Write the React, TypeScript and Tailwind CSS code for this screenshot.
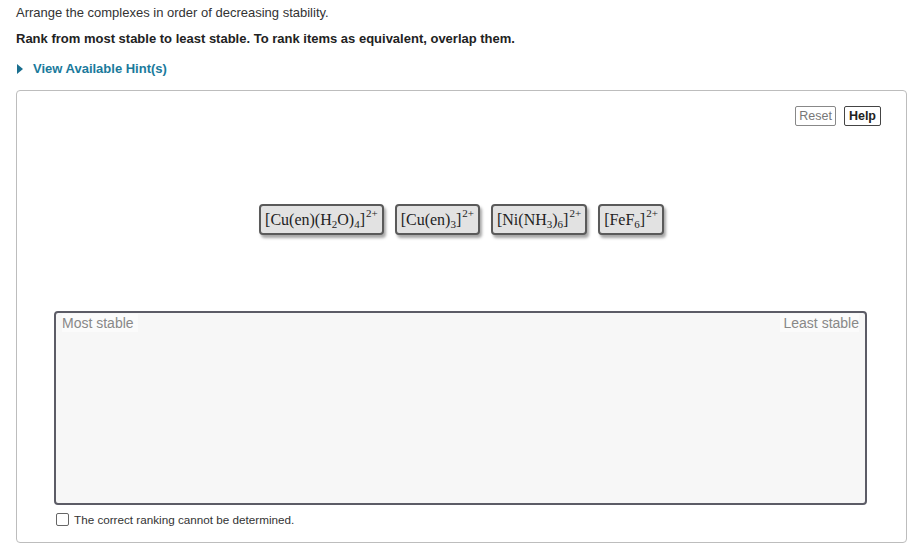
import React from 'react';

const sub = 'text-[11px] relative top-[3px] align-baseline leading-none';

const TILES: { id: string; body: React.ReactNode }[] = [
  { id: 'cuenh2o', body: <>[Cu(en)(H<span className={sub}>2</span>O)<span className={sub}>4</span>]</> },
  { id: 'cuen3', body: <>[Cu(en)<span className={sub}>3</span>]</> },
  { id: 'ninh3', body: <>[Ni(NH<span className={sub}>3</span>)<span className={sub}>6</span>]</> },
  { id: 'fef6', body: <>[FeF<span className={sub}>6</span>]</> },
];

function Tile({ children }: { children: React.ReactNode }) {
  return (
    <div className="h-[31px] px-[4px] flex items-center rounded-[4px] border-2 border-[#5a5a5a] bg-[#e2e2e2] shadow-[2px_3px_3px_rgba(0,0,0,0.35)] text-[16px] text-[#222] leading-none"
      style={{ fontFamily: '"Liberation Serif", "DejaVu Serif", serif' }}>
      <span>{children}</span>
      <span className="text-[11px] relative top-[-6px] ml-[1px] leading-none">2+</span>
    </div>
  );
}

export default function App() {
  return (
    <div className="w-[917px] h-[551px] bg-white text-[#333] overflow-hidden"
      style={{ fontFamily: '"Liberation Sans", Arial, sans-serif' }}>
      <div className="pl-4 pr-[11px] pt-[5px]">
        <p className="text-[13px] leading-[16px]">Arrange the complexes in order of decreasing stability.</p>
        <p className="text-[13px] font-bold leading-[16px] mt-[10px] text-[#222]">
          Rank from most stable to least stable. To rank items as equivalent, overlap them.
        </p>
        <div className="flex items-center mt-[14px] text-[13px] font-bold text-[#1a7a9c] leading-[16px]">
          <span className="w-0 h-0 border-y-[5px] border-y-transparent border-l-[6px] border-l-[#1a6f8f] ml-[1px] mr-[10px]" />
          View Available Hint(s)
        </div>

        <div className="mt-[13px] w-[891px] h-[453px] border border-[#bdbdbd] rounded-[4px] flex flex-col">
          <div className="flex justify-end gap-[8px] pt-[15px] pr-[25px]">
            <button className="h-[20px] px-[3px] border border-[#888] rounded-[2px] text-[12.5px] text-[#777] bg-white leading-none">Reset</button>
            <button className="h-[20px] px-[4px] border border-[#444] rounded-[2px] text-[12.5px] font-bold text-[#222] bg-white leading-none">Help</button>
          </div>

          <div className="flex justify-center gap-[11px] mt-[78px]">
            {TILES.map(t => <Tile key={t.id}>{t.body}</Tile>)}
          </div>

          <div className="mt-[76px] ml-[37px] w-[813px] h-[194px] border-2 border-[#5c5c66] rounded-[4px] bg-[#f7f7f7] flex justify-between items-start px-[6px] pt-[1px] text-[14px] text-[#888] leading-[18px]">
            <span className="bg-[#fbfbfb] pr-1">Most stable</span>
            <span className="bg-[#fbfbfb] pl-1">Least stable</span>
          </div>

          <label className="flex items-center ml-[39px] mt-[6px] text-[11.7px] text-[#333]">
            <span className="w-[13px] h-[13px] border border-[#666] rounded-[2px] bg-white mr-[5px]" />
            The correct ranking cannot be determined.
          </label>
        </div>
      </div>
    </div>
  );
}
